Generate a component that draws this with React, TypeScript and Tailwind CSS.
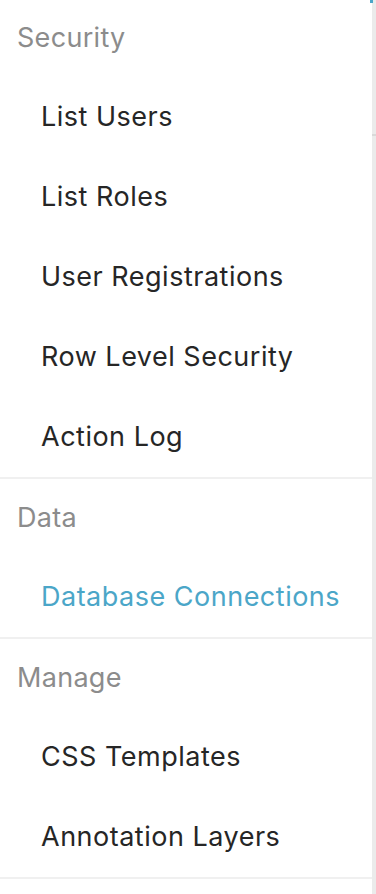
import React from "react";

type Section = { title: string; items: { label: string; active?: boolean }[] };

const sections: Section[] = [
  {
    title: "Security",
    items: [
      { label: "List Users" },
      { label: "List Roles" },
      { label: "User Registrations" },
      { label: "Row Level Security" },
      { label: "Action Log" },
    ],
  },
  { title: "Data", items: [{ label: "Database Connections", active: true }] },
  {
    title: "Manage",
    items: [{ label: "CSS Templates" }, { label: "Annotation Layers" }],
  },
];

export default function App() {
  return (
    <div
      className="flex w-[376px] h-[894px] overflow-hidden bg-white"
      style={{ fontFamily: "Inter, 'Noto Sans', sans-serif" }}
    >
      <div className="flex-1 flex flex-col -mt-px">
        {sections.map((s) => (
          <div key={s.title} className="flex flex-col border-b-2 border-[#f0f0f0]">
            <div className="h-[78px] flex items-center pl-[17px] text-[27px] tracking-[0.3px] text-[#8c8c8c]">
              {s.title}
            </div>
            {s.items.map((it) => (
              <div
                key={it.label}
                className={
                  "h-[80px] flex items-center pl-[41px] text-[27px] tracking-[0.5px] " +
                  (it.active ? "text-[#4ba6c8]" : "text-[#262626]")
                }
              >
                {it.label}
              </div>
            ))}
          </div>
        ))}
      </div>
      <div className="relative w-[4px] h-full bg-[#ebebeb]">
        <div className="absolute -left-[2px] top-0 w-[3px] h-[3px] bg-[#4ba6c8]" />
        <div className="absolute left-0 top-[134px] w-[4px] h-[2px] bg-[#d9d9d9]" />
      </div>
    </div>
  );
}
